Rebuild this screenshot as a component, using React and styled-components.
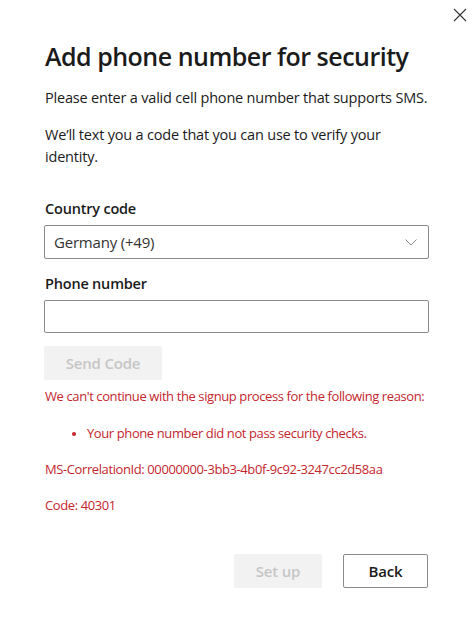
import React from "react";
import styled, { createGlobalStyle } from "styled-components";

const Global = createGlobalStyle`
  html, body { margin: 0; padding: 0; background: #fff; }
  body { font-family: "Open Sans", "Noto Sans", sans-serif; color: #1b1b1b; }
  * { box-sizing: border-box; }
`;

const Dialog = styled.div`
  position: relative;
  width: 474px;
  min-height: 619px;
  padding: 37px 45px 0 44px;
`;

const Close = styled.button`
  position: absolute;
  top: 8px;
  right: 7px;
  width: 14px;
  height: 14px;
  padding: 0;
  border: 0;
  background: none;
  display: flex;
  cursor: pointer;
`;

const Title = styled.h1`
  margin: 0 0 0 1px;
  font-size: 25px;
  line-height: 38px;
  font-weight: 600;
  color: #1b1b1b;
  letter-spacing: -0.5px;
  white-space: nowrap;
`;

const Text = styled.p`
  margin: ${(p) => p.$mt || 0}px 0 0 1px;
  font-size: 14.5px;
  line-height: 22px;
  color: #1b1b1b;
  letter-spacing: -0.2px;
`;

const Label = styled.label`
  display: block;
  margin: ${(p) => p.$mt}px 0 0 1px;
  font-size: 14.5px;
  line-height: 22px;
  font-weight: 600;
  color: #1b1b1b;
  letter-spacing: -0.2px;
`;

const Field = styled.div`
  margin-top: ${(p) => p.$mt}px;
  height: ${(p) => p.$h}px;
  border: 1px solid #8a8a8a;
  border-radius: 2px;
  display: flex;
  align-items: center;
  justify-content: space-between;
  padding: 0 11px 0 9px;
  font-size: 15px;
  color: #333;
  letter-spacing: -0.2px;
`;

const Button = styled.button`
  height: 34px;
  padding: 0;
  width: ${(p) => p.$w}px;
  border: 1px solid ${(p) => (p.$disabled ? "#f2f2f2" : "#8a8a8a")};
  border-radius: 2px;
  background: ${(p) => (p.$disabled ? "#f2f2f2" : "#fff")};
  color: ${(p) => (p.$disabled ? "#c6c6c6" : "#1b1b1b")};
  font-family: inherit;
  font-size: 15px;
  font-weight: 600;
  letter-spacing: -0.2px;
`;

const SendRow = styled.div`
  margin-top: 13px;
  display: flex;
`;

const Error = styled.p`
  margin: ${(p) => p.$mt}px 0 0 1px;
  font-size: 13px;
  line-height: 20px;
  color: #c4262e;
  letter-spacing: -0.4px;
  white-space: nowrap;
`;

const List = styled.ul`
  margin: 17px 0 0 0;
  padding: 0 0 0 43px;
  font-size: 13px;
  line-height: 20px;
  color: #c4262e;
  letter-spacing: -0.4px;
  li::marker { font-size: 11px; }
`;

const Footer = styled.div`
  margin-top: 39px;
  display: flex;
  justify-content: flex-end;
  gap: 21px;
  padding-right: 1px;
`;

export default function App() {
  return (
    <>
      <Global />
      <Dialog>
        <Close aria-label="Close">
          <svg width="14" height="14" viewBox="0 0 14 14">
            <path d="M1 1L13 13M13 1L1 13" stroke="#333" strokeWidth="1.1" fill="none" />
          </svg>
        </Close>
        <Title>Add phone number for security</Title>
        <Text $mt={12}>Please enter a valid cell phone number that supports SMS.</Text>
        <Text $mt={15}>We’ll text you a code that you can use to verify your identity.</Text>
        <Label $mt={30}>Country code</Label>
        <Field $h={34} $mt={5}>
          <span>Germany (+49)</span>
          <svg width="12" height="7" viewBox="0 0 12 7">
            <path d="M0.5 0.5L6 6L11.5 0.5" stroke="#8a8a8a" strokeWidth="1" fill="none" />
          </svg>
        </Field>
        <Label $mt={14}>Phone number</Label>
        <Field $h={33} $mt={5} />
        <SendRow>
          <Button $w={118} $disabled>Send Code</Button>
        </SendRow>
        <Error $mt={6}>We can't continue with the signup process for the following reason:</Error>
        <List>
          <li>Your phone number did not pass security checks.</li>
        </List>
        <Error $mt={16}>MS-CorrelationId: 00000000-3bb3-4b0f-9c92-3247cc2d58aa</Error>
        <Error $mt={16}>Code: 40301</Error>
        <Footer>
          <Button $w={88} $disabled>Set up</Button>
          <Button $w={85}>Back</Button>
        </Footer>
      </Dialog>
    </>
  );
}
